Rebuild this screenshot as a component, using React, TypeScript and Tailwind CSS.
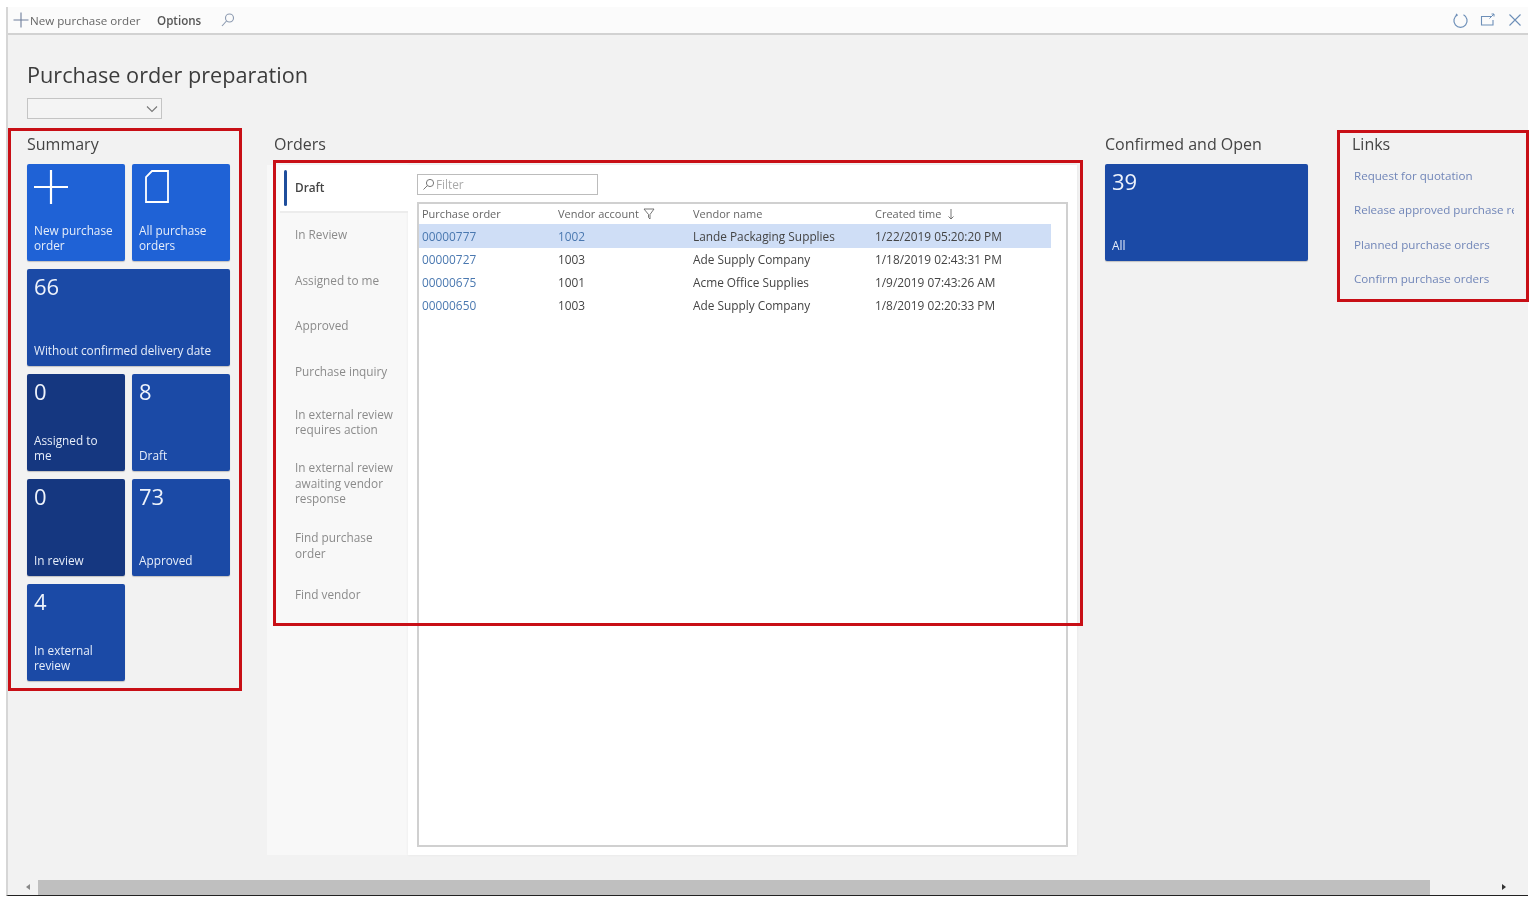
import React from "react";

const font = { fontFamily: '"Open Sans","Noto Sans",sans-serif' };

function Tile({ n, label, bg, wide, icon }: { n?: string; label: string; bg: string; wide?: boolean; icon?: React.ReactNode }) {
  return (
    <div className={`${bg} ${wide ? "col-span-2" : ""} h-[97px] rounded-[2px] flex flex-col justify-between pl-[7px] pr-[10px] pt-[7px] pb-[8px] text-white shadow-[0_1px_1px_rgba(0,0,0,0.2)]`}>
      <div className="h-[34px] text-[22px] leading-[21px] text-[#eef3fb]">{icon ?? n}</div>
      <div className="text-[11.8px] leading-[15px] text-[#e6edf9]">{label}</div>
    </div>
  );
}

const nav: { t: string; h: string }[] = [
  { t: "In Review", h: "h-[44px]" },
  { t: "Assigned to me", h: "h-[48px]" },
  { t: "Approved", h: "h-[42px]" },
  { t: "Purchase inquiry", h: "h-[50px]" },
  { t: "In external review requires action", h: "h-[50px]" },
  { t: "In external review awaiting vendor response", h: "h-[73px]" },
  { t: "Find purchase order", h: "h-[51px]" },
  { t: "Find vendor", h: "h-[47px]" },
];

const rows = [
  ["00000777", "1002", "Lande Packaging Supplies", "1/22/2019 05:20:20 PM"],
  ["00000727", "1003", "Ade Supply Company", "1/18/2019 02:43:31 PM"],
  ["00000675", "1001", "Acme Office Supplies", "1/9/2019 07:43:26 AM"],
  ["00000650", "1003", "Ade Supply Company", "1/8/2019 02:20:33 PM"],
];

const links = ["Request for quotation", "Release approved purchase requisitions", "Planned purchase orders", "Confirm purchase orders"];

const h2 = "text-[16px] leading-[22px] font-medium text-[#444] mt-[4px]";

export default function App() {
  return (
    <div style={font} className="w-[1536px] h-[900px] bg-white overflow-hidden pt-[7px] pl-[6px] text-[#333] blur-[0.4px]">
      <div className="w-[1522px] h-[889px] border-l-2 border-l-[#d6d6d6] border-b-[1.5px] border-b-[#222] bg-[#f2f2f2] flex flex-col">
        {/* toolbar */}
        <div className="h-[28px] shrink-0 bg-[#fbfbfb] border-b-2 border-b-[#d2d2d2] flex items-center pl-[5px] pr-[6px]">
          <svg width="16" height="16" viewBox="0 0 16 16" className="text-[#6f7f9c]">
            <path d="M8 0.5V15.5M0.5 8H15.5" stroke="currentColor" strokeWidth="1.1" fill="none" />
          </svg>
          <span className="text-[11.6px] text-[#666] ml-[1px] mt-[2px] w-[127px]">New purchase order</span>
          <span className="text-[11.6px] mt-[2px] font-semibold text-[#555]">Options</span>
          <svg width="16" height="16" viewBox="0 0 16 16" className="ml-[19px] text-[#8c9ab0]">
            <circle cx="9.5" cy="6" r="4" stroke="currentColor" strokeWidth="1.1" fill="none" />
            <path d="M6.5 9L2 14" stroke="currentColor" strokeWidth="1.1" />
          </svg>
          <div className="ml-auto flex items-center gap-[11px]">
            <svg width="17" height="17" viewBox="0 0 17 17" className="text-[#6d8fb8]">
              <path d="M5.5 2.8A6.6 6.6 0 1 0 11.5 2.8" stroke="currentColor" strokeWidth="1.2" fill="none" />
              <path d="M4 1.2L5.8 3.2L3.6 4.4" fill="currentColor" />
            </svg>
            <svg width="16" height="16" viewBox="0 0 16 16" className="text-[#6d8fb8]">
              <path d="M12 4.5H1.5V13H13V8" stroke="currentColor" strokeWidth="1.1" fill="none" />
              <path d="M9.5 6.5L14 2M11.5 2H14V4.5" stroke="currentColor" strokeWidth="1" fill="none" />
            </svg>
            <svg width="14" height="14" viewBox="0 0 14 14" className="text-[#6d8fb8] ml-[1px]">
              <path d="M1.5 1.5L12.5 12.5M12.5 1.5L1.5 12.5" stroke="currentColor" strokeWidth="1.1" fill="none" />
            </svg>
          </div>
        </div>

        {/* title */}
        <div className="pl-[19px] pt-[25px] shrink-0 h-[94px]">
          <div className="text-[21.7px] leading-[30px] text-[#3c3c3c]">Purchase order preparation</div>
          <div className="mt-[8px] w-[135px] h-[21px] border border-[#c4c4c4] bg-[#f4f4f4] flex items-center justify-end pr-[3px]">
            <svg width="12" height="8" viewBox="0 0 12 8" className="text-[#777]">
              <path d="M1 1.5L6 6.5L11 1.5" stroke="currentColor" strokeWidth="1.1" fill="none" />
            </svg>
          </div>
        </div>

        {/* columns */}
        <div className="flex flex-1 min-h-0">
          {/* summary */}
          <section className="relative w-[203px] ml-[19px] shrink-0">
            <h2 className={h2}>Summary</h2>
            <div className="grid grid-cols-[98px_98px] gap-x-[7px] gap-y-[8px] mt-[9px]">
              <Tile
                label="New purchase order"
                bg="bg-[#1f62d6]"
                icon={
                  <svg width="36" height="36" viewBox="0 0 36 36" className="-mt-[2px] -ml-[1px]">
                    <path d="M18 1V35M1 18H35" stroke="#fff" strokeWidth="2.2" fill="none" />
                  </svg>
                }
              />
              <Tile
                label="All purchase orders"
                bg="bg-[#1f62d6]"
                icon={
                  <svg width="30" height="36" viewBox="0 0 30 36" className="-mt-[2px] ml-[3px]">
                    <path d="M10 2H26V33H4V8Z" stroke="#fff" strokeWidth="1.8" fill="none" />
                  </svg>
                }
              />
              <Tile n="66" label="Without confirmed delivery date" bg="bg-[#1b4aa6]" wide />
              <Tile n="0" label="Assigned to me" bg="bg-[#153780]" />
              <Tile n="8" label="Draft" bg="bg-[#1b4aa6]" />
              <Tile n="0" label="In review" bg="bg-[#153780]" />
              <Tile n="73" label="Approved" bg="bg-[#1b4aa6]" />
              <Tile n="4" label="In external review" bg="bg-[#1b4aa6]" />
            </div>
            <div className="absolute left-[-19px] top-[-1px] w-[234px] h-[563px] border-[3px] border-[#c80f16] pointer-events-none" />
          </section>

          {/* orders */}
          <section className="relative w-[802px] ml-[44px] shrink-0">
            <h2 className={h2}>Orders</h2>
            <div className="flex mt-[10px] h-[690px] ml-[-7px] w-[810px] bg-[#f8f8f8]">
              <div className="w-[141px] shrink-0">
                <div className="h-[48px] ml-[13px] border-b-2 border-b-[#ececec] bg-white flex items-center relative pl-[15px] text-[11.8px] font-semibold text-[#444]">
                  <span className="absolute left-[4px] top-[5px] w-[3px] h-[36px] bg-[#1f4e9c] rounded-[2px]" />
                  Draft
                </div>
                {nav.map((n) => (
                  <div key={n.t} className={`${n.h} flex items-center pl-[28px] pr-[9px] text-[11.8px] leading-[15.5px] text-[#8b8b8b]`}>
                    {n.t}
                  </div>
                ))}
              </div>
              <div className="w-[669px] h-[690px] bg-white pl-[9px] pr-[9px] pt-[9px] pb-[8px] flex flex-col shadow-[0_0_3px_rgba(0,0,0,0.06)]">
                <div className="w-[181px] h-[21px] border border-[#bcbcbc] flex items-center pl-[4px] shrink-0">
                  <svg width="13" height="13" viewBox="0 0 13 13" className="text-[#777]">
                    <circle cx="8" cy="5" r="3.6" stroke="currentColor" strokeWidth="1" fill="none" />
                    <path d="M5.4 7.6L1.5 11.5" stroke="currentColor" strokeWidth="1" />
                  </svg>
                  <span className="ml-[1px] text-[11.8px] text-[#aaa]">Filter</span>
                </div>
                <div className="mt-[7px] flex-1 border-2 border-[#d0d0d0] pr-[15px]">
                  <div className="grid grid-cols-[136px_135px_182px_1fr] h-[20px] items-center pl-[3px] text-[11px] text-[#666]">
                    <span>Purchase order</span>
                    <span className="flex items-center gap-[4px]">
                      Vendor account
                      <svg width="12" height="12" viewBox="0 0 12 12" className="text-[#666]">
                        <path d="M1 1H11L7 6.5V11L5.5 9.5V6.5Z" stroke="currentColor" strokeWidth="0.9" fill="none" />
                      </svg>
                    </span>
                    <span>Vendor name</span>
                    <span className="flex items-center gap-[6px]">
                      Created time
                      <svg width="8" height="12" viewBox="0 0 8 12" className="text-[#666]">
                        <path d="M4 1V11M1.5 8.5L4 11L6.5 8.5" stroke="currentColor" strokeWidth="0.9" fill="none" />
                      </svg>
                    </span>
                  </div>
                  {rows.map((r, i) => (
                    <div key={r[0]} className={`grid grid-cols-[136px_135px_182px_1fr] items-center pl-[3px] pt-[2px] text-[11.85px] text-[#444] ${i === 0 ? "h-[24px] bg-[#cfdef6]" : "h-[22.7px]"}`}>
                      <span className="text-[#4a78b0]">{r[0]}</span>
                      <span className={i === 0 ? "text-[#4a78b0]" : ""}>{r[1]}</span>
                      <span>{r[2]}</span>
                      <span>{r[3]}</span>
                    </div>
                  ))}
                </div>
              </div>
            </div>
            <div className="absolute left-[-1px] top-[31px] w-[810px] h-[466px] border-[3px] border-[#c80f16] pointer-events-none" />
          </section>

          {/* confirmed */}
          <section className="w-[203px] ml-[29px] shrink-0">
            <h2 className={h2}>Confirmed and Open</h2>
            <div className="mt-[9px]">
              <Tile n="39" label="All" bg="bg-[#1b4aa6]" />
            </div>
          </section>

          {/* links */}
          <section className="relative w-[192px] ml-[29px] shrink-0 pl-[15px]">
            <h2 className={h2}>Links</h2>
            <div className="mt-[13px] w-[162px] overflow-hidden pl-[2px]">
              {links.map((l) => (
                <div key={l} className="h-[34.3px] whitespace-nowrap text-[11.6px] leading-[16px] text-[#7186b8]">
                  {l}
                </div>
              ))}
            </div>
            <div className="absolute left-0 top-[1px] w-[192px] h-[172px] border-[3px] border-[#c80f16] pointer-events-none" />
          </section>
        </div>

        {/* scrollbar */}
        <div className="h-[16px] shrink-0 flex items-center pl-[18px] pr-[22px]">
          <span className="w-0 h-0 border-y-[3px] border-y-transparent border-r-[4px] border-r-[#888]" />
          <div className="ml-[8px] w-[1392px] h-[15px] bg-[#bfbfbf]" />
          <span className="ml-auto w-0 h-0 border-y-[3px] border-y-transparent border-l-[4px] border-l-[#333]" />
        </div>
      </div>
    </div>
  );
}
